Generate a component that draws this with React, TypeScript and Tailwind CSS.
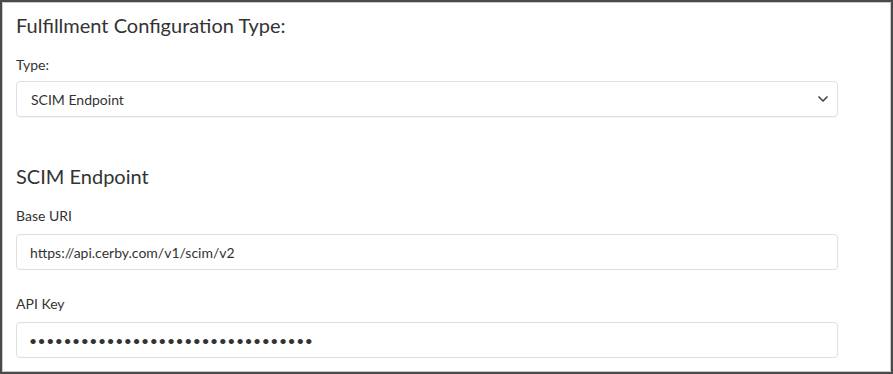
import React from 'react';
import { ChevronDown } from 'lucide-react';

const Label: React.FC<{ children: React.ReactNode }> = ({ children }) => (
  <div className="text-[14px] leading-[17px] text-[#333]">{children}</div>
);

export default function App() {
  const dots = '•'.repeat(33);
  return (
    <div
      className="w-[893px] h-[374px] bg-white border-2 border-[#4a4a4a] shadow-[inset_1px_1px_0_#c8c8c8,inset_-1px_-1px_0_#c8c8c8] overflow-hidden"
      style={{ fontFamily: 'Lato, "Open Sans", sans-serif' }}
    >
      <div className="pl-[14px] pt-[11px] w-[836px]">
        <h2 className="text-[20px] leading-[24px] text-[#333]">
          Fulfillment Configuration Type:
        </h2>
        <div className="mt-[19px]">
          <Label>Type:</Label>
        </div>
        <div className="mt-[8px] h-[36px] border border-[#dcdfe4] rounded-[4px] flex items-center justify-between pl-[14px] pr-[6px] shadow-[0_1px_1px_rgba(0,0,0,0.04)]">
          <span className="text-[14px] text-[#333]">SCIM Endpoint</span>
          <ChevronDown className="w-4 h-4 text-[#444]" strokeWidth={2.5} />
        </div>

        <h2 className="mt-[47px] text-[20px] leading-[24px] text-[#333]">
          SCIM Endpoint
        </h2>
        <div className="mt-[19px]">
          <Label>Base URI</Label>
        </div>
        <div className="mt-[10px] h-[36px] border border-[#dcdfe4] rounded-[4px] flex items-center pl-[13px]">
          <span className="text-[14px] text-[#333]">https://api.cerby.com/v1/scim/v2</span>
        </div>
        <div className="mt-[25px]">
          <Label>API Key</Label>
        </div>
        <div className="mt-[10px] h-[36px] border border-[#dcdfe4] rounded-[4px] flex items-center pl-[12px]">
          <span className="text-[14px] text-[#333] tracking-[0.5px]">{dots}</span>
        </div>
      </div>
    </div>
  );
}
